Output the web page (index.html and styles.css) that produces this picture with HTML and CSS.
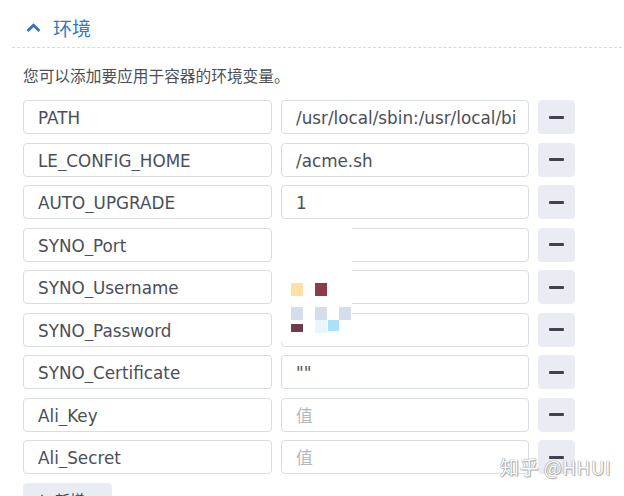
FILE: index.html
```html
<!DOCTYPE html>
<html lang="zh">
<head>
<meta charset="utf-8">
<link rel="stylesheet" href="styles.css">
</head>
<body>
<div class="panel">
  <div class="head">
    <svg class="chev" width="15" height="10" viewBox="0 0 15 10"><path d="M1.5 8 L7.5 2.2 L13.5 8" fill="none" stroke="#2f74c0" stroke-width="2.8"/></svg>
    <span class="title">环境</span>
  </div>
  <div class="sep"></div>
  <p class="desc">您可以添加要应用于容器的环境变量。</p>
  <div class="rows">
    <div class="row"><input class="field" value="PATH"><input class="field" value="/usr/local/sbin:/usr/local/bin:/usr/sbin"><button class="minus"><span></span></button></div>
    <div class="row"><input class="field" value="LE_CONFIG_HOME"><input class="field" value="/acme.sh"><button class="minus"><span></span></button></div>
    <div class="row"><input class="field" value="AUTO_UPGRADE"><input class="field" value="1"><button class="minus"><span></span></button></div>
    <div class="row"><input class="field" value="SYNO_Port"><input class="field" value=""><button class="minus"><span></span></button></div>
    <div class="row"><input class="field" value="SYNO_Username"><input class="field" value=""><button class="minus"><span></span></button></div>
    <div class="row"><input class="field" value="SYNO_Password"><input class="field" value=""><button class="minus"><span></span></button></div>
    <div class="row"><input class="field" value="SYNO_Certificate"><input class="field" value="&quot;&quot;"><button class="minus"><span></span></button></div>
    <div class="row"><input class="field" value="Ali_Key"><input class="field" placeholder="值"><button class="minus"><span></span></button></div>
    <div class="row"><input class="field" value="Ali_Secret"><input class="field" placeholder="值"><button class="minus"><span></span></button></div>
  </div>
  <button class="add"><span class="plus">+</span>新增</button>
</div>
<div class="mask">
  <i class="px" style="left:11px;top:57px;background:#fbe1a6"></i>
  <i class="px" style="left:35px;top:57px;background:#8a3c48"></i>
  <i class="px" style="left:11px;top:81px;background:#d5dee8"></i>
  <i class="px" style="left:35px;top:81px;background:#d5dee8"></i>
  <i class="px" style="left:59px;top:81px;background:#d5dee8"></i>
  <i class="px small" style="left:11px;top:98px;background:#6c3c4a"></i>
  <i class="px" style="left:35px;top:94px;background:#e6f8fc"></i>
  <i class="px" style="left:48px;top:94px;width:11px;height:11px;background:#a9e1f8"></i>
</div>
<div class="watermark">知乎 @HHUI</div>
</body>
</html>
```

FILE: styles.css
```css
* { box-sizing: border-box; }
body {
  margin: 0;
  background: #fff;
  font-family: "DejaVu Sans", "Noto Sans CJK SC", sans-serif;
  position: relative;
  width: 624px;
  height: 496px;
  overflow: hidden;
}
.panel {
  padding: 14px 2px 0 12px;
}
.head {
  display: flex;
  align-items: center;
  height: 28px;
  padding-left: 14px;
}
.chev { margin-right: 12px; margin-top: -1px; }
.title {
  font-family: "Noto Sans CJK SC", sans-serif;
  font-size: 19px;
  color: #3277c2;
  line-height: 28px;
}
.sep {
  margin-top: 5px;
  border-top: 1px dashed #d6d9dd;
}
.desc {
  margin: 17px 0 0 11px;
  font-family: "Noto Sans CJK SC", sans-serif;
  font-size: 15.7px;
  line-height: 22px;
  color: #4b5058;
}
.rows {
  margin: 13px 0 0 11px;
  display: flex;
  flex-direction: column;
  gap: 8.5px;
}
.row {
  display: flex;
  gap: 9px;
  height: 34px;
}
.field {
  width: 249px;
  height: 34px;
  border: 1px solid #d9dce0;
  border-radius: 4px;
  padding: 2px 12px 0 14px;
  font-family: "DejaVu Sans", "Noto Sans CJK SC", sans-serif;
  font-size: 16.8px;
  color: #4a4f57;
  background: #fff;
  outline: none;
}
.field + .field { width: 248px; }
.field::placeholder {
  color: #b4b8bd;
  font-family: "Noto Sans CJK SC", sans-serif;
}
.minus {
  width: 37px;
  height: 34px;
  border: none;
  border-radius: 4px;
  background: #e9edf3;
  display: flex;
  align-items: center;
  justify-content: center;
  padding: 0;
}
.minus span {
  display: block;
  width: 15px;
  height: 3px;
  border-radius: 1px;
  background: #3d4350;
}
.add {
  margin: 9px 0 0 11px;
  width: 89px;
  height: 30px;
  border: none;
  border-radius: 4px;
  background: #e9edf3;
  font-family: "Noto Sans CJK SC", sans-serif;
  font-size: 15px;
  color: #3d4350;
  text-align: left;
  padding: 0 0 0 14px;
}
.plus { margin-right: 8px; font-size: 18px; }
.mask {
  position: absolute;
  left: 280px;
  top: 226px;
  width: 72px;
  height: 116px;
  background: #fff;
}
.px {
  position: absolute;
  width: 12px;
  height: 13px;
}
.px.small { height: 8px; }
.watermark {
  position: absolute;
  left: 500px;
  top: 453px;
  font-family: "Noto Sans CJK SC", sans-serif;
  font-size: 19px;
  color: #fff;
  letter-spacing: 0.5px;
  text-shadow: 0 0 1px #8a8a8a, 0 0 1px #8a8a8a, 1px 1px 1px #b0b0b0;
}
```
